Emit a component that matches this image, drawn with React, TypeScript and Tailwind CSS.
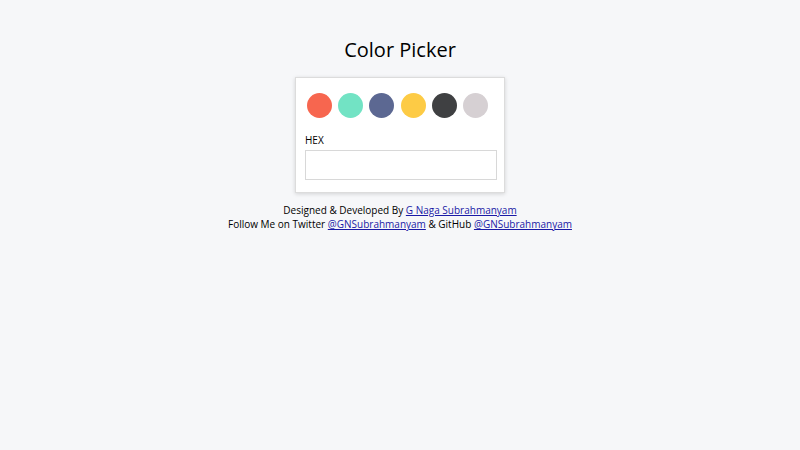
const colors = ["#f7664f", "#72e3c4", "#5c6892", "#fdcb45", "#3f4042", "#d6d0d3"];

export default function App() {
  return (
    <div className="min-h-[450px] w-full bg-[#f6f7f9] font-['Open_Sans',sans-serif] text-black">
      <div className="flex flex-col items-center pt-[35px]">
        <h1 className="text-[20px] leading-[30px]">Color Picker</h1>
        <div className="mt-[12px] w-[210px] border border-[#dcdcdc] bg-white pl-[9px] pr-[7px] pt-[15px] pb-[12px] shadow-[0_1px_4px_rgba(0,0,0,0.15)]">
          <div className="ml-[2px] flex gap-[6.2px]">
            {colors.map((c) => (
              <button key={c} className="h-[25px] w-[25px] rounded-full" style={{ backgroundColor: c }} />
            ))}
          </div>
          <label className="mt-[13px] block text-[10px] leading-[18px]">HEX</label>
          <input
            type="text"
            className="mt-[1px] block h-[30px] w-[192px] border border-[#d8d8d8] px-2 text-[10px] outline-none"
          />
        </div>
        <div className="mt-[10px] text-center text-[10px] leading-[14px]">
          <p>
            Designed &amp; Developed By{" "}
            <a href="#" className="text-[#1a1aa6] underline">G Naga Subrahmanyam</a>
          </p>
          <p>
            Follow Me on Twitter{" "}
            <a href="#" className="text-[#1a1aa6] underline">@GNSubrahmanyam</a> &amp; GitHub{" "}
            <a href="#" className="text-[#1a1aa6] underline">@GNSubrahmanyam</a>
          </p>
        </div>
      </div>
    </div>
  );
}
